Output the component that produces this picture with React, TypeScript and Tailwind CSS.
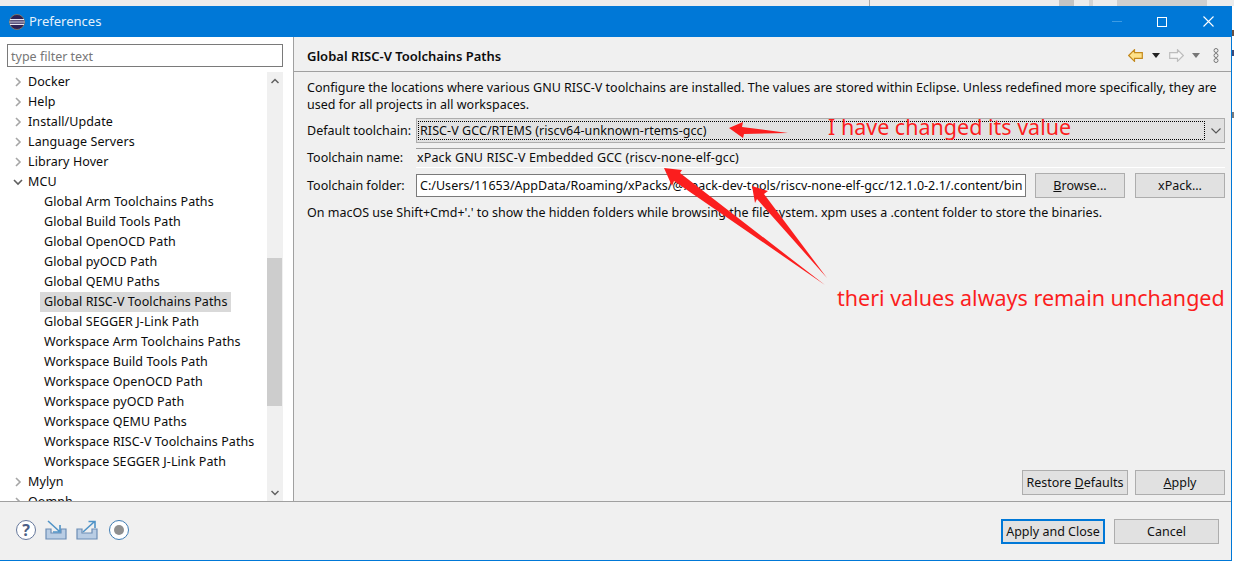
import React from "react";

const treeRows = [
  { label: "Docker", kind: "closed" },
  { label: "Help", kind: "closed" },
  { label: "Install/Update", kind: "closed" },
  { label: "Language Servers", kind: "closed" },
  { label: "Library Hover", kind: "closed" },
  { label: "MCU", kind: "open" },
  { label: "Global Arm Toolchains Paths", kind: "child" },
  { label: "Global Build Tools Path", kind: "child" },
  { label: "Global OpenOCD Path", kind: "child" },
  { label: "Global pyOCD Path", kind: "child" },
  { label: "Global QEMU Paths", kind: "child" },
  { label: "Global RISC-V Toolchains Paths", kind: "child", selected: true },
  { label: "Global SEGGER J-Link Path", kind: "child" },
  { label: "Workspace Arm Toolchains Paths", kind: "child" },
  { label: "Workspace Build Tools Path", kind: "child" },
  { label: "Workspace OpenOCD Path", kind: "child" },
  { label: "Workspace pyOCD Path", kind: "child" },
  { label: "Workspace QEMU Paths", kind: "child" },
  { label: "Workspace RISC-V Toolchains Paths", kind: "child" },
  { label: "Workspace SEGGER J-Link Path", kind: "child" },
  { label: "Mylyn", kind: "closed" },
  { label: "Oomph", kind: "closed" },
];

const EclipseLogo = () => (
  <svg width="16" height="16" viewBox="0 0 16 16">
    <circle cx="8" cy="8" r="7.5" fill="#2c2255" stroke="#c08a4a" strokeWidth="0.6" />
    <path d="M1 5.6h14M0.5 8h15M1 10.4h14" stroke="#e8e8f4" strokeWidth="1.2" />
  </svg>
);

const TreeChevron = ({ open }: { open: boolean }) =>
  open ? (
    <svg width="10" height="10" viewBox="0 0 10 10">
      <path d="M1 3l4 4 4-4" fill="none" stroke="#5f5f5f" strokeWidth="1.6" />
    </svg>
  ) : (
    <svg width="10" height="10" viewBox="0 0 10 10">
      <path d="M3 1l4 4-4 4" fill="none" stroke="#a6a6a6" strokeWidth="1.6" />
    </svg>
  );

const ArrowButton = ({ dir, fill, stroke }: { dir: "left" | "right"; fill: string; stroke: string }) => (
  <svg width="15" height="13" viewBox="0 0 15 13">
    <path
      d={dir === "left" ? "M0.7 6.5L6.5 0.7v3h7.8v5.6H6.5v3z" : "M14.3 6.5L8.5 0.7v3H0.7v5.6h7.8v3z"}
      fill={fill}
      stroke={stroke}
      strokeWidth="1.2"
    />
  </svg>
);

const DropTriangle = ({ color }: { color: string }) => (
  <svg width="8" height="5" viewBox="0 0 8 5" className="block">
    <path d="M0 0h8L4 5z" fill={color} />
  </svg>
);

const HelpIcon = () => (
  <div className="flex h-[20px] w-[20px] items-center justify-center rounded-full border-[1.5px] border-[#66789c] bg-white text-[16px] leading-none font-bold text-[#4c5f86]">
    ?
  </div>
);

const TrayIcon = ({ out }: { out?: boolean }) => (
  <svg width="22" height="20" viewBox="0 0 22 20" className="block">
    <path d="M1 9h5v4h10V9h5v10H1z" fill="#b9cde4" stroke="#6c8db5" strokeWidth="1.2" />
    {out ? (
      <path d="M7 12L18 2M12.5 1.5H19V8" fill="none" stroke="#4f93c7" strokeWidth="1.6" />
    ) : (
      <path d="M3 1l11 10M15 5v7H8" fill="none" stroke="#4f93c7" strokeWidth="1.6" />
    )}
  </svg>
);

const RecordIcon = () => (
  <div className="flex h-[20px] w-[20px] items-center justify-center rounded-full border-[1.5px] border-[#3f7cb3] bg-white">
    <div className="h-[10px] w-[10px] rounded-full bg-[#8f8f8f]" />
  </div>
);

const PushButton = ({
  className = "border border-[#adadad]",
  children,
}: {
  className?: string;
  children: React.ReactNode;
}) => (
  <div className={`flex h-[25px] items-center justify-center bg-[#e1e1e1] pt-[2px] text-[#111] ${className}`}>
    {children}
  </div>
);

export default function App() {
  return (
    <div className="relative flex h-[561px] w-[1234px] flex-col overflow-hidden bg-white font-['Noto_Sans',sans-serif] text-[12.5px] text-[#0c0c0c]">
      {/* bits of the window behind the dialog */}
      <div className="flex h-[6px] bg-[#ececec]">
        <div className="w-[869px]" />
        <div className="w-[1px] bg-[#a8a8a8]" />
        <div className="w-[189px]" />
        <div className="w-[15px] bg-[#c4c4c4]" />
        <div className="w-[15px]" />
        <div className="w-[4px] bg-[#d4d4d4]" />
        <div className="w-[24px]" />
        <div className="w-[90px] bg-[#cfcfcf]" />
      </div>

      <div className="flex min-h-0 flex-1">
        <div className="flex w-[1232px] flex-col border-r border-b border-[#0078d7] bg-[#f0f0f0]">
          {/* title bar */}
          <div className="flex h-[31px] items-center bg-[#0078d7] text-[13px] text-[#e4f1fb]">
            <div className="ml-[9px]">
              <EclipseLogo />
            </div>
            <span className="ml-[4px]">Preferences</span>
            <div className="ml-auto flex items-center">
              <div className="mr-[35px] h-[1px] w-[10px] bg-[#3d9be3]" />
              <div className="mr-[36px] h-[10px] w-[10px] border border-white" />
              <svg width="11" height="11" viewBox="0 0 11 11" className="mr-[17px]">
                <path d="M0.5 0.5l10 10M10.5 0.5l-10 10" stroke="white" strokeWidth="1.1" />
              </svg>
            </div>
          </div>

          <div className="flex min-h-0 flex-1">
            {/* left pane */}
            <div className="flex w-[293px] flex-col bg-white pt-[7px] pl-[7px]">
              <div className="flex h-[23px] w-[276px] items-center border border-[#7a7a7a] px-[3px] pt-[3px] text-[#777]">
                type filter text
              </div>
              <div className="mt-[5px] flex min-h-0 w-[276px] flex-1">
                <div className="min-h-0 flex-1 overflow-hidden tracking-[0.09px]">
                  {treeRows.map((row) => (
                    <div key={row.label} className="flex h-[20px] items-center">
                      {row.kind === "child" ? (
                        <span
                          className={`ml-[33px] flex h-[20px] items-center px-[4px] whitespace-nowrap ${row.selected ? "bg-[#d9d9d9]" : ""}`}
                        >
                          {row.label}
                        </span>
                      ) : (
                        <>
                          <span className="ml-[6px] w-[15px]">
                            <TreeChevron open={row.kind === "open"} />
                          </span>
                          <span>{row.label}</span>
                        </>
                      )}
                    </div>
                  ))}
                </div>
                <div className="flex w-[16px] flex-col bg-[#f0f0f0]">
                  <div className="flex h-[17px] items-center justify-center">
                    <svg width="8" height="6" viewBox="0 0 8 6">
                      <path d="M0.5 5l3.5-3.5L7.5 5" fill="none" stroke="#606060" strokeWidth="1.5" />
                    </svg>
                  </div>
                  <div className="mt-[169px] h-[148px] w-[15px] bg-[#cdcdcd]" />
                  <div className="mt-auto flex h-[17px] items-center justify-center">
                    <svg width="8" height="6" viewBox="0 0 8 6">
                      <path d="M0.5 1l3.5 3.5L7.5 1" fill="none" stroke="#606060" strokeWidth="1.5" />
                    </svg>
                  </div>
                </div>
              </div>
            </div>

            <div className="w-[1px] bg-[#a0a0a0]" />

            {/* right pane */}
            <div className="flex min-w-0 flex-1 flex-col">
              <div className="flex h-[35px] items-center border-b border-[#a0a0a0] pt-[2px] pr-[12px] pl-[13px]">
                <span className="mt-[4px] text-[13px] font-semibold">Global RISC-V Toolchains Paths</span>
                <div className="ml-auto flex items-center">
                  <ArrowButton dir="left" fill="#ffe28a" stroke="#c48a1e" />
                  <span className="mr-[9px] ml-[9px]">
                    <DropTriangle color="#222" />
                  </span>
                  <ArrowButton dir="right" fill="#f5f5f5" stroke="#bdbdbd" />
                  <span className="mr-[13px] ml-[8px]">
                    <DropTriangle color="#777" />
                  </span>
                  <svg width="6" height="15" viewBox="0 0 6 15" className="block">
                    <circle cx="3" cy="2.5" r="2" fill="none" stroke="#777" />
                    <circle cx="3" cy="7.5" r="2" fill="none" stroke="#777" />
                    <circle cx="3" cy="12.5" r="2" fill="none" stroke="#777" />
                  </svg>
                </div>
              </div>

              <div className="flex min-h-0 flex-1 flex-col pt-[7px] pr-[6px] pl-[13px]">
                <p className="leading-[17px]">
                  Configure the locations where various GNU RISC-V toolchains are installed. The values are stored within
                  Eclipse. Unless redefined more specifically, they are used for all projects in all workspaces.
                </p>

                <div className="mt-[5px] flex h-[25px] items-center">
                  <span className="w-[109px] pt-[2px]">Default toolchain:</span>
                  <div className="flex h-[25px] flex-1 items-center border border-[#adadad] bg-[#e1e1e1] pl-[1px]">
                    <div className="flex h-[19px] w-[787px] items-center border border-dotted border-black pt-[2px] pl-[1px] tracking-[0.07px]">
                      RISC-V GCC/RTEMS (riscv64-unknown-rtems-gcc)
                    </div>
                    <svg width="10" height="6" viewBox="0 0 10 6" className="ml-[6px]">
                      <path d="M0.5 0.5L5 5l4.5-4.5" fill="none" stroke="#555" strokeWidth="1.1" />
                    </svg>
                  </div>
                </div>

                <div className="mt-[5px] flex h-[20px] items-center">
                  <span className="w-[109px]">Toolchain name:</span>
                  <div className="flex h-[20px] flex-1 items-center border-t border-b border-t-[#a0a0a0] border-b-white pl-[1px] tracking-[0.14px]">
                    xPack GNU RISC-V Embedded GCC (riscv-none-elf-gcc)
                  </div>
                </div>

                <div className="mt-[5px] flex h-[25px] items-center">
                  <span className="w-[109px] pt-[2px]">Toolchain folder:</span>
                  <div className="flex h-[23px] w-[610px] items-center overflow-hidden border border-[#7a7a7a] bg-white pt-[2px] pl-[3px] tracking-[0.02px] whitespace-nowrap">
                    C:/Users/11653/AppData/Roaming/xPacks/@xpack-dev-tools/riscv-none-elf-gcc/12.1.0-2.1/.content/bin
                  </div>
                  <PushButton className="ml-[9px] w-[90px] border border-[#adadad]">
                    <span>
                      <span className="underline">B</span>rowse...
                    </span>
                  </PushButton>
                  <PushButton className="ml-[10px] w-[90px] border border-[#adadad]">xPack...</PushButton>
                </div>

                <p className="mt-[6px] leading-[17px]">
                  On macOS use Shift+Cmd+'.' to show the hidden folders while browsing the file system. xpm uses a .content
                  folder to store the binaries.
                </p>

                <div className="mt-auto mb-[6px] flex justify-end gap-[7px]">
                  <PushButton className="w-[106px] border border-[#adadad]">
                    <span>
                      Restore <span className="underline">D</span>efaults
                    </span>
                  </PushButton>
                  <PushButton className="w-[90px] border border-[#adadad]">
                    <span>
                      <span className="underline">A</span>pply
                    </span>
                  </PushButton>
                </div>
              </div>
            </div>
          </div>

          {/* footer */}
          <div className="flex h-[59px] items-center border-t border-[#a0a0a0] bg-[#f0f0f0] pr-[12px] pl-[16px]">
            <div className="mb-[2px] flex items-center">
              <HelpIcon />
              <div className="ml-[9px]">
                <TrayIcon />
              </div>
              <div className="ml-[9px]">
                <TrayIcon out />
              </div>
              <div className="ml-[11px]">
                <RecordIcon />
              </div>
            </div>
            <div className="ml-auto flex gap-[9px]">
              <PushButton className="w-[104px] border-2 border-[#0078d7]">Apply and Close</PushButton>
              <PushButton className="w-[105px] border border-[#adadad]">Cancel</PushButton>
            </div>
          </div>
        </div>

        {/* sliver of the page behind the dialog */}
        <div className="flex w-[2px] flex-col bg-white">
          <div className="mt-[24px] h-[6px] bg-[#6b5040]" />
          <div className="mt-[14px] h-[6px] bg-[#3d4a78]" />
          <div className="mt-[56px] h-[6px] bg-[#77797c]" />
        </div>
      </div>

      {/* red annotations drawn over the screenshot */}
      <svg className="absolute inset-0" width="1234" height="561" viewBox="0 0 1234 561">
        <path d="M729 128L743 122L742 127L788 133L744 134L743 138Z" fill="#fb1e1e" />
        <path d="M664 168L682 170L680 173L825 285L674 181L672 186Z" fill="#fb1e1e" />
        <path d="M752 186L768 191L764 194L827 278L757 199L755 203Z" fill="#fb1e1e" />
      </svg>
      <span className="absolute top-[112px] left-[828px] text-[21.5px] leading-[30px] whitespace-nowrap text-[#fb1e1e]">
        I have changed its value
      </span>
      <span className="absolute top-[283px] left-[837px] text-[21.5px] leading-[30px] whitespace-nowrap text-[#fb1e1e]">
        theri values always remain unchanged
      </span>
    </div>
  );
}
